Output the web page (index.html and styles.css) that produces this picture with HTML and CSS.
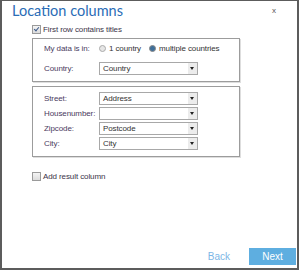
FILE: index.html
```html
<!DOCTYPE html>
<html lang="en">
<head>
  <meta charset="UTF-8">
  <title>Location columns</title>
  <link rel="stylesheet" href="styles.css">
</head>
<body>

<div class="dialog">
  <span class="close">x</span>
  <h1 class="title">Location columns</h1>

  <label class="check-row">
    <span class="check checked"></span>First row contains titles
  </label>

  <div class="group">
    <div class="row">
      <span class="lbl">My data is in:</span>
      <span class="radio"></span><span class="opt">1 country</span>
      <span class="radio on"></span><span class="opt">multiple countries</span>
    </div>
    <div class="row row-country">
      <span class="lbl">Country:</span>
      <div class="select">Country<span class="arrow"></span></div>
    </div>
  </div>

  <div class="group group-address">
    <div class="row field">
      <span class="lbl">Street:</span>
      <div class="select">Address<span class="arrow"></span></div>
    </div>
    <div class="row field">
      <span class="lbl">Housenumber:</span>
      <div class="select"><span class="arrow"></span></div>
    </div>
    <div class="row field">
      <span class="lbl">Zipcode:</span>
      <div class="select">Postcode<span class="arrow"></span></div>
    </div>
    <div class="row field">
      <span class="lbl">City:</span>
      <div class="select">City<span class="arrow"></span></div>
    </div>
  </div>

  <label class="check-row check-result">
    <span class="check"></span>Add result column
  </label>

  <div class="footer">
    <span class="back">Back</span>
    <span class="next">Next</span>
  </div>
</div>

</body>
</html>
```

FILE: styles.css
```css
body {
  margin: 0;
  background-color: #fff;
  font-family: 'Liberation Sans', Arial, sans-serif;
  font-size: 8px;
  letter-spacing: -0.1px;
  color: #333;
}

.dialog {
  position: relative;
  box-sizing: border-box;
  width: 299px;
  height: 270px;
  border: 2px solid #5c5c5c;
  border-top-width: 1px;
  display: flex;
  flex-direction: column;
  padding: 0 0 0 30px;
}

.close {
  position: absolute;
  top: 5px;
  right: 21px;
  font-size: 8px;
  color: #555;
}

.title {
  margin: 0 0 0 -20px;
  font-family: Lato, sans-serif;
  font-weight: normal;
  font-size: 14.5px;
  letter-spacing: 0;
  line-height: 19px;
  color: #2a6cb6;
}

.check-row {
  display: flex;
  align-items: center;
  height: 10px;
  margin-top: 4px;
  color: #3b3348;
}

.check {
  box-sizing: border-box;
  width: 9px;
  height: 9px;
  margin-right: 2px;
  border: 1px solid #9a9a9a;
  background: linear-gradient(#f4f4f4, #dcdcdc);
}

.check.checked::after {
  content: "";
  display: block;
  width: 2px;
  height: 4px;
  margin: 0 0 0 2px;
  border: solid #3c5a8a;
  border-width: 0 1px 1px 0;
  transform: rotate(40deg);
}

.group {
  box-sizing: border-box;
  width: 208px;
  height: 44px;
  margin-top: 4px;
  padding: 5px 0 0 11px;
  border: 1px solid #9c9c9c;
  box-shadow: 1px 1px 0 #dedede;
}

.group-address {
  height: 71px;
  margin-top: 4px;
  padding-top: 5px;
}

.row {
  display: flex;
  align-items: center;
  height: 9px;
  color: #4a3a5e;
}

.row-country {
  margin-top: 9px;
  height: 13px;
}

.field {
  height: 13px;
  margin-bottom: 2px;
}

.lbl {
  width: 55px;
}

.opt {
  margin-right: 8px;
  color: #333;
}

.radio {
  box-sizing: border-box;
  width: 7px;
  height: 7px;
  margin-right: 3px;
  border-radius: 50%;
  border: 1px solid #aaa;
  background: #e6e6e6;
}

.radio.on {
  background: #3f6f9a;
  border-color: #8a8a8a;
}

.select {
  position: relative;
  box-sizing: border-box;
  width: 99px;
  height: 13px;
  padding-left: 3px;
  line-height: 11px;
  border: 1px solid #a8a8a8;
  color: #333;
  background: #fff;
}

.arrow {
  position: absolute;
  top: 0;
  right: 0;
  width: 9px;
  height: 11px;
  background: #ececec;
}

.arrow::after {
  content: "";
  position: absolute;
  top: 4px;
  left: 2px;
  border: 2px solid transparent;
  border-top: 3px solid #222;
}

.check-result {
  margin-top: 14px;
}

.footer {
  margin-top: auto;
  display: flex;
  align-items: center;
  justify-content: flex-end;
  padding: 0 1px 3px 0;
}

.back {
  color: #7cb6e6;
  font-size: 10px;
  letter-spacing: 0;
  margin-right: 19px;
}

.next {
  width: 47px;
  height: 17px;
  line-height: 17px;
  text-align: center;
  background-color: #5eaee0;
  color: #fff;
  font-size: 10px;
  letter-spacing: 0;
}
```
